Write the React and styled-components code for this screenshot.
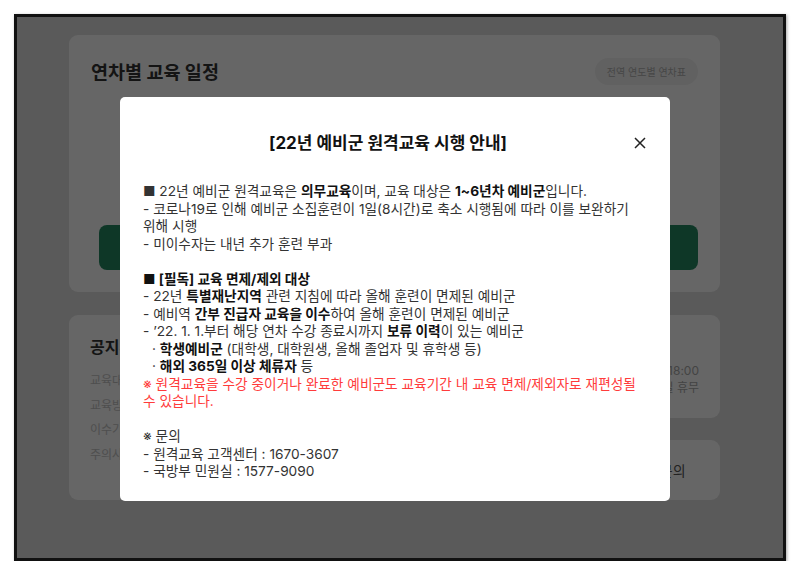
import React from "react";
import styled, { createGlobalStyle } from "styled-components";

const GlobalStyle = createGlobalStyle`
  body {
    margin: 0;
    background: #fff;
    font-family: Inter, "Noto Sans CJK KR", "Noto Sans", sans-serif;
  }
`;

const Frame = styled.div`
  position: relative;
  box-sizing: border-box;
  width: 772px;
  height: 547px;
  margin: 14px 0 0 14px;
  border: 3px solid #111;
  box-shadow: 1px 1px 3px rgba(0, 0, 0, 0.35);
  overflow: hidden;
  background: #e2e2e2;
`;

const Page = styled.div`
  padding: 18px 63px 0 52px;
`;

const Card = styled.section`
  box-sizing: border-box;
  background: #fff;
  border-radius: 9px;
  height: ${(props) => props.$height}px;
`;

const ScheduleCard = styled(Card)`
  display: flex;
  flex-direction: column;
  padding: 23px 22px 22px 22px;
`;

const CardHeader = styled.div`
  display: flex;
  align-items: center;
  justify-content: space-between;
  height: 27px;
`;

const CardTitle = styled.h2`
  margin: 0;
  font-size: ${(props) => props.$size || 18.5}px;
  font-weight: 700;
  line-height: ${(props) => (props.$size ? 20 : 24)}px;
  color: #333;
`;

const Pill = styled.span`
  display: inline-flex;
  align-items: center;
  height: 27px;
  padding: 0 12px;
  border-radius: 14px;
  background: #f2f2f2;
  color: #b0b0b0;
  font-size: 10px;
`;

const ApplyButton = styled.button`
  margin: auto 0 0 8px;
  height: 45px;
  border: 0;
  border-radius: 8px;
  background: #248a63;
  color: #fff;
  font-family: inherit;
  font-size: 15px;
  font-weight: 700;
`;

const Columns = styled.div`
  display: grid;
  grid-template-columns: 1fr 1fr;
  gap: 20px;
  margin-top: 23px;
`;

const Stack = styled.div`
  display: flex;
  flex-direction: column;
  gap: 22px;
`;

const NoticeCard = styled(Card)`
  padding: 22px 21px;
`;

const NoticeList = styled.ul`
  list-style: none;
  margin: 12px 0 0;
  padding: 0;
`;

const NoticeItem = styled.li`
  font-size: 12px;
  line-height: 24.6px;
  color: #c4c4c4;
`;

const InfoRow = styled.div`
  display: flex;
  justify-content: space-between;
  font-size: 12px;
  line-height: 17px;
  color: #aaa;
  &:first-of-type {
    margin-top: 5px;
  }
`;

const LinkCard = styled(Card)`
  display: flex;
  align-items: center;
  justify-content: center;
  font-size: 14px;
  color: #555;
`;

const Overlay = styled.div`
  position: absolute;
  inset: 0;
  box-sizing: border-box;
  padding: 80px 0 0 103px;
  background: rgba(0, 0, 0, 0.6);
`;

const Modal = styled.div`
  box-sizing: border-box;
  width: 550px;
  height: 404px;
  padding: 34px 23px 0 23px;
  border-radius: 5px;
  background: #fff;
`;

const ModalHeader = styled.div`
  display: flex;
  align-items: center;
  height: 24px;
`;

const ModalTitle = styled.h3`
  flex: 1;
  margin: 0;
  text-align: center;
  font-size: 17px;
  font-weight: 700;
  line-height: 24px;
  color: #111;
`;

const CloseButton = styled.button`
  display: flex;
  align-items: center;
  justify-content: center;
  width: 14px;
  height: 14px;
  padding: 0;
  border: 0;
  background: none;
  color: #222;
`;

const ModalBody = styled.div`
  margin-top: 28px;
  font-size: 13.7px;
  line-height: 17.5px;
  color: #333;
  word-break: keep-all;
`;

const Block = styled.div`
  & + & {
    margin-top: 17.5px;
  }
`;

const Line = styled.p`
  margin: 0;
  padding-left: ${(props) => (props.$indent ? 9 : 0)}px;
  color: ${(props) => (props.$red ? "#ff3b3b" : "inherit")};
`;

const B = styled.b`
  font-weight: 700;
  color: #111;
`;

export default function App() {
  return (
    <>
      <GlobalStyle />
      <Frame>
        <Page>
          <ScheduleCard $height={257}>
            <CardHeader>
              <CardTitle>연차별 교육 일정</CardTitle>
              <Pill>전역 연도별 연차표</Pill>
            </CardHeader>
            <ApplyButton>원격교육 바로가기</ApplyButton>
          </ScheduleCard>
          <Columns>
            <NoticeCard $height={185}>
              <CardTitle $size={16}>공지사항</CardTitle>
              <NoticeList>
                <NoticeItem>교육대상 : 전역 1~6년차 예비군</NoticeItem>
                <NoticeItem>교육방법 : PC 및 모바일 원격 수강</NoticeItem>
                <NoticeItem>이수기준 : 전 과목 수강 완료</NoticeItem>
                <NoticeItem>주의사항 : 대리 수강 금지</NoticeItem>
              </NoticeList>
            </NoticeCard>
            <Stack>
              <NoticeCard $height={103}>
                <CardTitle $size={16}>고객센터</CardTitle>
                <InfoRow>
                  <span>운영시간</span>
                  <span>평일 09:00 ~ 18:00</span>
                </InfoRow>
                <InfoRow>
                  <span>점심 12:00 ~ 13:00</span>
                  <span>주말 · 공휴일 휴무</span>
                </InfoRow>
              </NoticeCard>
              <LinkCard $height={60}>원격교육 수강 관련 자주 묻는 질문 및 문의</LinkCard>
            </Stack>
          </Columns>
        </Page>
        <Overlay>
          <Modal>
            <ModalHeader>
              <ModalTitle>[22년 예비군 원격교육 시행 안내]</ModalTitle>
              <CloseButton aria-label="닫기">
                <svg width="12" height="12" viewBox="0 0 12 12">
                  <path d="M1 1L11 11M11 1L1 11" stroke="currentColor" strokeWidth="1.5" />
                </svg>
              </CloseButton>
            </ModalHeader>
            <ModalBody>
              <Block>
                <Line>
                  ■ 22년 예비군 원격교육은 <B>의무교육</B>이며, 교육 대상은 <B>1~6년차 예비군</B>입니다.
                </Line>
                <Line>- 코로나19로 인해 예비군 소집훈련이 1일(8시간)로 축소 시행됨에 따라 이를 보완하기 위해 시행</Line>
                <Line>- 미이수자는 내년 추가 훈련 부과</Line>
              </Block>
              <Block>
                <Line>
                  <B>■ [필독] 교육 면제/제외 대상</B>
                </Line>
                <Line>
                  - 22년 <B>특별재난지역</B> 관련 지침에 따라 올해 훈련이 면제된 예비군
                </Line>
                <Line>
                  - 예비역 <B>간부 진급자 교육을 이수</B>하여 올해 훈련이 면제된 예비군
                </Line>
                <Line>
                  - ’22. 1. 1.부터 해당 연차 수강 종료시까지 <B>보류 이력</B>이 있는 예비군
                </Line>
                <Line $indent>
                  · <B>학생예비군</B> (대학생, 대학원생, 올해 졸업자 및 휴학생 등)
                </Line>
                <Line $indent>
                  · <B>해외 365일 이상 체류자</B> 등
                </Line>
                <Line $red>
                  ※ 원격교육을 수강 중이거나 완료한 예비군도 교육기간 내 교육 면제/제외자로 재편성될 수 있습니다.
                </Line>
              </Block>
              <Block>
                <Line>※ 문의</Line>
                <Line>- 원격교육 고객센터 : 1670-3607</Line>
                <Line>- 국방부 민원실 : 1577-9090</Line>
              </Block>
            </ModalBody>
          </Modal>
        </Overlay>
      </Frame>
    </>
  );
}
